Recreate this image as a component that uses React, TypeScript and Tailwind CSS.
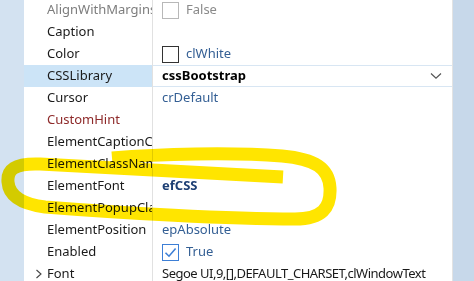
import React from "react";

type Row = {
  name: string;
  nameClass?: string;
  value?: React.ReactNode;
  selected?: boolean;
  expand?: boolean;
};

function Check({ checked, muted }: { checked?: boolean; muted?: boolean }) {
  return (
    <span
      className={
        "inline-flex items-center justify-center w-[17px] h-[17px] border mr-[7px] " +
        (checked ? "border-[#3d7fd6]" : muted ? "border-[#b8b8b8]" : "border-[#333333]")
      }
    >
      {checked && (
        <svg width="13" height="13" viewBox="0 0 13 13">
          <path d="M1.5 6.8 L5 10.2 L11.6 2.6" fill="none" stroke="#3d7fd6" strokeWidth="1.6" />
        </svg>
      )}
    </span>
  );
}

const rows: Row[] = [
  {
    name: "AlignWithMargins",
    nameClass: "text-[#7d7d7d]",
    value: (
      <span className="flex items-center text-[#8a8a8a]">
        <Check muted />
        False
      </span>
    ),
  },
  { name: "Caption" },
  {
    name: "Color",
    value: (
      <span className="flex items-center text-[#345f94]">
        <Check />
        clWhite
      </span>
    ),
  },
  {
    name: "CSSLibrary",
    selected: true,
    value: <span className="font-bold text-black">cssBootstrap</span>,
  },
  { name: "Cursor", value: <span className="text-[#345f94]">crDefault</span> },
  { name: "CustomHint", nameClass: "text-[#8e2a2a]" },
  { name: "ElementCaptionClassName" },
  { name: "ElementClassName" },
  { name: "ElementFont", value: <span className="font-bold text-[#1d3f74]">efCSS</span> },
  { name: "ElementPopupClassName" },
  { name: "ElementPosition", value: <span className="text-[#345f94]">epAbsolute</span> },
  {
    name: "Enabled",
    value: (
      <span className="flex items-center text-[#345f94]">
        <Check checked />
        True
      </span>
    ),
  },
  {
    name: "Font",
    expand: true,
    value: (
      <span className="text-[#1a1a1a] tracking-[-0.5px]">
        Segoe UI,9,[],DEFAULT_CHARSET,clWindowText
      </span>
    ),
  },
];

export default function App() {
  return (
    <div
      className="relative w-[474px] h-[281px] overflow-hidden bg-white flex text-[13px] text-[#1a1a1a]"
      style={{ fontFamily: '"Noto Sans", "Open Sans", sans-serif' }}
    >
      <div className="w-[24px] shrink-0 bg-[#d3e2f1]" />
      <div className="flex-1 min-w-0 flex flex-col mt-[-1px] border-r border-[#e3e3e3]">
        {rows.map((r) => (
          <div key={r.name} className="flex h-[22px] shrink-0">
            <div
              className={
                "w-[129px] shrink-0 flex items-center overflow-hidden whitespace-nowrap border-r border-[#e1e1e1] " +
                (r.selected ? "bg-[#cce4f7]" : "")
              }
            >
              <span className="w-[23px] shrink-0 flex justify-center pl-[6px]">
                {r.expand && (
                  <svg width="8" height="10" viewBox="0 0 8 10">
                    <path d="M1.5 1 L6 5 L1.5 9" fill="none" stroke="#444" strokeWidth="1.1" />
                  </svg>
                )}
              </span>
              <span className={r.nameClass ?? ""}>{r.name}</span>
            </div>
            <div
              className={
                "flex-1 min-w-0 flex items-center pl-[9px] whitespace-nowrap overflow-hidden " +
                (r.selected ? "border-y border-[#d8e6f3] justify-between pr-[10px]" : "")
              }
            >
              {r.value}
              {r.selected && (
                <svg width="12" height="8" viewBox="0 0 12 8">
                  <path d="M1 1.5 L6 6.2 L11 1.5" fill="none" stroke="#555" strokeWidth="1.2" />
                </svg>
              )}
            </div>
          </div>
        ))}
      </div>
      <div className="w-[21px] shrink-0 bg-[#c7d8ea]" />
      <svg
        className="absolute left-0 top-0 pointer-events-none mix-blend-multiply"
        width="474"
        height="281"
        viewBox="0 0 474 281"
      >
        <path
          d="M283 177 C 220 174, 120 168, 40 164 C 14 163, 7 170, 8 182 C 9 196, 22 204, 45 207 C 120 213, 230 219, 295 219 C 322 219, 331 208, 330 188 C 329 168, 315 159, 282 156 C 230 152, 160 154, 112 158"
          fill="none"
          stroke="#ffe500"
          strokeWidth="13"
          strokeLinecap="butt"
          strokeLinejoin="round"
        />
      </svg>
    </div>
  );
}
